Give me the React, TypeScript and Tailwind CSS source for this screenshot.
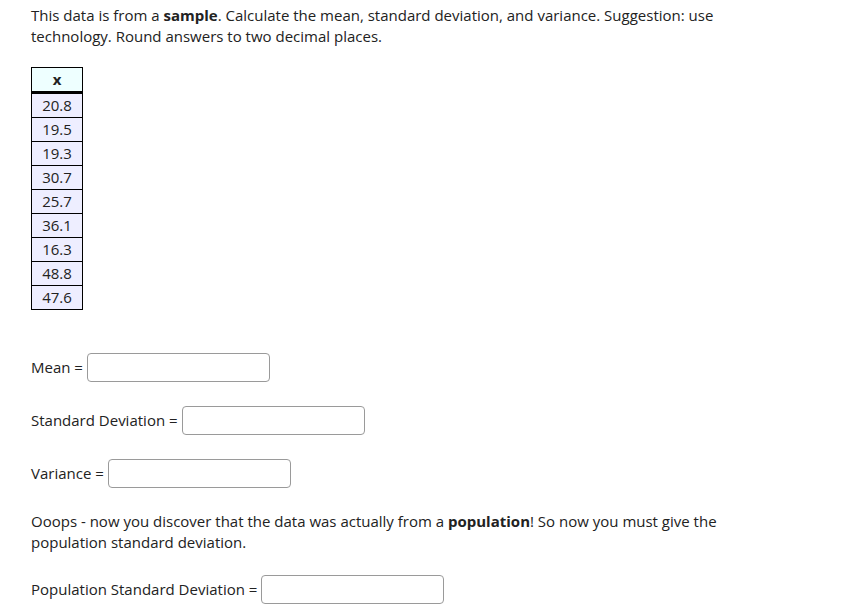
import React from "react";

const values = ["20.8", "19.5", "19.3", "30.7", "25.7", "36.1", "16.3", "48.8", "47.6"];

function Field({ label }: { label: string }) {
  return (
    <div className="flex items-center h-[29px]">
      <span>{label} =</span>
      <span className="w-[4px]" />
      <div className="w-[183px] h-[29px] border border-[#9a9a9a] rounded-[4px] bg-white" />
    </div>
  );
}

export default function App() {
  return (
    <div
      className="bg-white min-h-[612px] pl-[31px] pt-[5px] text-[15px] leading-[21px] text-[#222222]"
      style={{ fontFamily: '"Open Sans", "Liberation Sans", sans-serif' }}
    >
      <div className="w-[730px]">
        <p>
          This data is from a <b>sample</b>. Calculate the mean, standard deviation, and variance. Suggestion: use
          technology. Round answers to two decimal places.
        </p>
        <div className="mt-[20px] w-[52px] border-t border-l border-r border-black">
          <div className="h-[26px] border-b-[3px] border-black bg-[#eeffff] flex items-center justify-center font-bold">
            x
          </div>
          {values.map((v) => (
            <div
              key={v}
              className="h-[24px] border-b border-black bg-[#eeeeff] flex items-center justify-center"
            >
              {v}
            </div>
          ))}
        </div>
        <div className="mt-[43px] flex flex-col gap-[24px]">
          <Field label="Mean" />
          <Field label="Standard Deviation" />
          <Field label="Variance" />
        </div>
        <p className="mt-[23px]">
          Ooops - now you discover that the data was actually from a <b>population</b>! So now you must give the
          population standard deviation.
        </p>
        <div className="mt-[22px]">
          <Field label="Population Standard Deviation" />
        </div>
      </div>
    </div>
  );
}
